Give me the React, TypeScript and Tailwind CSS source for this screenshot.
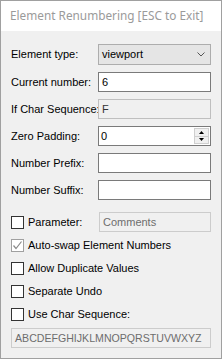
import React from "react";

const font = { fontFamily: '"Liberation Sans", Arial, sans-serif' };

function Label({ children }: { children: React.ReactNode }) {
  return <div className="w-[87px] shrink-0 whitespace-nowrap text-[11px] leading-none text-black">{children}</div>;
}

function Box({ value, disabled, gray }: { value?: string; disabled?: boolean; gray?: boolean }) {
  return (
    <div
      className={
        "flex h-[20px] w-[113px] items-center border px-[3px] text-[11px] leading-none " +
        (disabled ? "border-[#cccccc] bg-[#f0f0f0] " : "border-[#7a7a7a] bg-white ") +
        (gray ? "text-[#6d6d6d]" : "text-black")
      }
    >
      {value}
    </div>
  );
}

function Check({ checked, label }: { checked?: boolean; label: string }) {
  return (
    <div className="flex h-[23px] items-center">
      <div
        className={
          "flex h-[13px] w-[13px] items-center justify-center border " +
          (checked ? "border-[#a0a0a0] bg-white" : "border-[#333333] bg-white")
        }
      >
        {checked && (
          <svg width="11" height="11" viewBox="0 0 11 11">
            <polyline points="1.5,5.5 4,8.5 9.5,1.5" fill="none" stroke="#8a8a8a" strokeWidth="1.2" />
          </svg>
        )}
      </div>
      <span className="ml-[4px] text-[11px] leading-none text-black">{label}</span>
    </div>
  );
}

export default function App() {
  return (
    <div className="flex h-[359px] w-[222px] flex-col border border-[#a0a0a0] bg-[#f0f0f0]" style={font}>
      <div
        className="flex h-[30px] items-center bg-white pl-[9px] text-[11.8px] text-[#9a9a9a]"
        style={{ fontFamily: '"Noto Sans", "Open Sans", sans-serif' }}
      >
        Element Renumbering [ESC to Exit]
      </div>
      <div className="flex flex-col pl-[10px] pt-[13px]">
        <div className="flex items-center">
          <Label>Element type:</Label>
          <div className="flex h-[21px] w-[113px] items-center justify-between border border-[#adadad] bg-[#e5e5e5] pl-[3px] pr-[5px] text-[11px] leading-none text-black">
            <span>viewport</span>
            <svg width="8" height="5" viewBox="0 0 8 5">
              <polyline points="0.5,0.5 4,4 7.5,0.5" fill="none" stroke="#555" strokeWidth="1" />
            </svg>
          </div>
        </div>
        <div className="mt-[7px] flex items-center">
          <Label>Current number:</Label>
          <Box value="6" />
        </div>
        <div className="mt-[7px] flex items-center">
          <Label>If Char Sequence:</Label>
          <div className="flex h-[20px] w-[113px] items-center border border-[#bfbfbf] bg-[#f0f0f0] px-[3px] text-[11px] leading-none text-[#333]">
            F
          </div>
        </div>
        <div className="mt-[7px] flex items-center">
          <Label>Zero Padding:</Label>
          <div className="flex h-[20px] w-[113px] items-stretch border border-[#7a7a7a] bg-white">
            <div className="flex flex-1 items-center px-[2px] text-[11px] leading-none text-black">0</div>
            <div className="m-[1px] flex w-[15px] flex-col">
              <div className="flex flex-1 items-center justify-center border border-[#cfcfcf] bg-[#f0f0f0]">
                <svg width="5" height="3" viewBox="0 0 5 3">
                  <polygon points="0,3 5,3 2.5,0" fill="#000" />
                </svg>
              </div>
              <div className="flex flex-1 items-center justify-center border border-t-0 border-[#cfcfcf] bg-[#f0f0f0]">
                <svg width="5" height="3" viewBox="0 0 5 3">
                  <polygon points="0,0 5,0 2.5,3" fill="#000" />
                </svg>
              </div>
            </div>
          </div>
        </div>
        <div className="mt-[7px] flex items-center">
          <Label>Number Prefix:</Label>
          <Box />
        </div>
        <div className="mt-[7px] flex items-center">
          <Label>Number Suffix:</Label>
          <Box />
        </div>
        <div className="mt-[12px] flex h-[20px] items-center">
          <div className="w-[88px] shrink-0">
            <Check label="Parameter:" />
          </div>
          <div className="flex h-[20px] w-[112px] items-center border border-[#cccccc] bg-[#f0f0f0] px-[3px] text-[11px] leading-none text-[#6d6d6d]">
            Comments
          </div>
        </div>
        <div className="mt-[2px] flex flex-col">
          <Check checked label="Auto-swap Element Numbers" />
          <Check label="Allow Duplicate Values" />
          <Check label="Separate Undo" />
          <Check label="Use Char Sequence:" />
        </div>
        <div className="mt-[2px] flex h-[20px] w-[200px] items-center border border-[#cccccc] bg-[#f0f0f0] px-[3px] text-[10.6px] leading-none text-[#6d6d6d]">
          ABCDEFGHIJKLMNOPQRSTUVWXYZ
        </div>
      </div>
    </div>
  );
}
